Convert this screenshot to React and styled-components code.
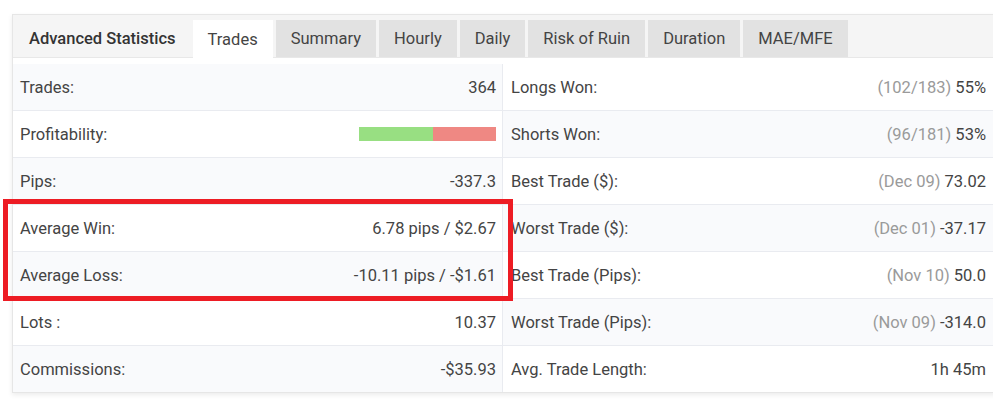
import React from "react";
import styled, { createGlobalStyle } from "styled-components";

const tabs = ["Trades", "Summary", "Hourly", "Daily", "Risk of Ruin", "Duration", "MAE/MFE"];

const leftRows = [
  { label: "Trades:", value: "364" },
  { label: "Profitability:", bar: 54 },
  { label: "Pips:", value: "-337.3" },
  { label: "Average Win:", value: "6.78 pips / $2.67" },
  { label: "Average Loss:", value: "-10.11 pips / -$1.61" },
  { label: "Lots :", value: "10.37" },
  { label: "Commissions:", value: "-$35.93" },
];

const rightRows = [
  { label: "Longs Won:", note: "(102/183)", value: "55%" },
  { label: "Shorts Won:", note: "(96/181)", value: "53%" },
  { label: "Best Trade ($):", note: "(Dec 09)", value: "73.02" },
  { label: "Worst Trade ($):", note: "(Dec 01)", value: "-37.17" },
  { label: "Best Trade (Pips):", note: "(Nov 10)", value: "50.0" },
  { label: "Worst Trade (Pips):", note: "(Nov 09)", value: "-314.0" },
  { label: "Avg. Trade Length:", value: "1h 45m" },
];

export default function App() {
  return (
    <>
      <GlobalStyle />
      <Page>
        <Panel>
          <Header>
            <Title>Advanced Statistics</Title>
            <Tabs>
              {tabs.map((t, i) => (
                <Tab key={t} $active={i === 0}>
                  {t}
                </Tab>
              ))}
            </Tabs>
          </Header>
          <Body>
            <Column $divider>
              {leftRows.map((r, i) => (
                <Row key={r.label} $shade={i % 2 === 0}>
                  <Label>{r.label}</Label>
                  {r.bar ? (
                    <Bar>
                      <Win style={{ width: `${r.bar}%` }} />
                      <Loss />
                    </Bar>
                  ) : (
                    <Value>{r.value}</Value>
                  )}
                </Row>
              ))}
            </Column>
            <Column>
              {rightRows.map((r, i) => (
                <Row key={r.label} $shade={i % 2 === 1} $right>
                  <Label>{r.label}</Label>
                  <Value>
                    {r.note && <Note>{r.note} </Note>}
                    {r.value}
                  </Value>
                </Row>
              ))}
            </Column>
          </Body>
        </Panel>
        <Highlight />
      </Page>
    </>
  );
}

// Styled Components
const GlobalStyle = createGlobalStyle`
  body {
    margin: 0;
    background: #ffffff;
    font-family: Roboto, "Liberation Sans", sans-serif;
    overflow: hidden;
  }
`;

const Page = styled.div`
  position: relative;
  width: 993px;
  height: 400px;
  padding: 14px 0 0 12px;
  box-sizing: border-box;
  overflow: hidden;
`;

const Panel = styled.div`
  width: 983px;
  border: 1px solid #e6e6e6;
  background: #ffffff;
  box-shadow: 0 2px 5px rgba(0, 0, 0, 0.08);
`;

const Header = styled.div`
  display: flex;
  align-items: flex-end;
  height: 42px;
  background: #f5f5f5;
  border-bottom: 1px solid #e8e8e8;
`;

const Title = styled.div`
  align-self: center;
  padding: 5px 17px 0 16px;
  font-size: 16.5px;
  font-weight: 500;
  color: #333333;
`;

const Tabs = styled.div`
  display: flex;
  gap: 3px;
`;

const Tab = styled.div`
  display: flex;
  align-items: center;
  padding: 0 15px;
  font-size: 16.5px;
  color: #444444;
  background: ${(p) => (p.$active ? "#ffffff" : "#e2e2e2")};
  margin-bottom: ${(p) => (p.$active ? "-1px" : "0")};
  height: ${(p) => (p.$active ? "38px" : "37px")};
  cursor: pointer;
`;

const Body = styled.div`
  display: grid;
  grid-template-columns: 490px 1fr;
  padding-top: 6px;
`;

const Column = styled.div`
  border-right: ${(p) => (p.$divider ? "1px solid #e9ebf0" : "none")};
`;

const Row = styled.div`
  height: 46px;
  display: flex;
  align-items: center;
  justify-content: space-between;
  padding: ${(p) => (p.$right ? "0 10px 0 8px" : "0 6px 0 7px")};
  background: ${(p) => (p.$shade ? "#f9fafc" : "#ffffff")};
  border-bottom: 1px solid #e9ebf0;
  font-size: 16.5px;
  color: #444444;
  &:last-child {
    border-bottom: none;
  }
`;

const Label = styled.span``;

const Value = styled.span`
  white-space: nowrap;
`;

const Note = styled.span`
  color: #9a9a9a;
`;

const Bar = styled.div`
  display: flex;
  width: 137px;
  height: 14px;
`;

const Win = styled.div`
  background: #98df82;
`;

const Loss = styled.div`
  flex: 1;
  background: #ef8883;
`;

const Highlight = styled.div`
  position: absolute;
  left: 3px;
  top: 199px;
  width: 510px;
  height: 102px;
  box-sizing: border-box;
  border: 5px solid #ed1c24;
  pointer-events: none;
`;
